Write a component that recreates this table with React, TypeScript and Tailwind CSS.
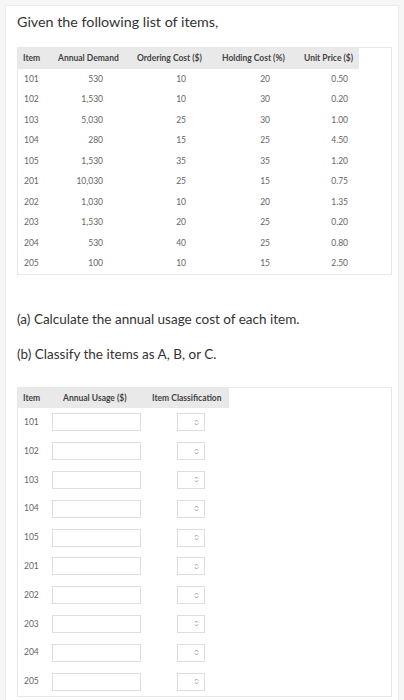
const items = [
  { id: '101', demand: '530', order: '10', hold: '20', price: '0.50' },
  { id: '102', demand: '1,530', order: '10', hold: '30', price: '0.20' },
  { id: '103', demand: '5,030', order: '25', hold: '30', price: '1.00' },
  { id: '104', demand: '280', order: '15', hold: '25', price: '4.50' },
  { id: '105', demand: '1,530', order: '35', hold: '35', price: '1.20' },
  { id: '201', demand: '10,030', order: '25', hold: '15', price: '0.75' },
  { id: '202', demand: '1,030', order: '10', hold: '20', price: '1.35' },
  { id: '203', demand: '1,530', order: '20', hold: '25', price: '0.20' },
  { id: '204', demand: '530', order: '40', hold: '25', price: '0.80' },
  { id: '205', demand: '100', order: '10', hold: '15', price: '2.50' },
];

function SelectArrows() {
  return (
    <svg width="5" height="7" viewBox="0 0 5 7" fill="none" stroke="#9a9a9a" strokeWidth="1">
      <path d="M1 2.6 L2.5 1 L4 2.6" />
      <path d="M1 4.4 L2.5 6 L4 4.4" />
    </svg>
  );
}

export default function App() {
  return (
    <div className="bg-[#f6f6f6] pt-[5px] px-[5px] min-h-[700px] font-['Lato',sans-serif]">
      <div className="bg-white border-t border-l border-r border-[#ececec] pl-[11px] pr-[8px] pt-[7px] pb-[10px]">
        <p className="text-[14.3px] leading-[18px] text-[#333]">Given the following list of items,</p>

        {/* Data table */}
        <div className="mt-[16px] w-[375px] border border-[#e8e8e8]">
          <div className="grid grid-cols-[35px_79px_85px_86px_56px] w-[341px] h-[21px] items-center bg-[#e9e9e9] text-[8.5px] font-bold text-[#444]">
            <span className="pl-[5px]">Item</span>
            <span className="pl-[5px]">Annual Demand</span>
            <span className="pl-[5px]">Ordering Cost ($)</span>
            <span className="pl-[5px]">Holding Cost (%)</span>
            <span className="pl-[1px]">Unit Price ($)</span>
          </div>
          {items.map((it) => (
            <div
              key={it.id}
              className="grid grid-cols-[35px_79px_85px_86px_56px] w-[341px] h-[20.5px] items-center text-[8.5px] text-[#666]"
            >
              <span className="pl-[6px]">{it.id}</span>
              <span className="text-right pr-[29px]">{it.demand}</span>
              <span className="text-right pr-[31px]">{it.order}</span>
              <span className="text-right pr-[33px]">{it.hold}</span>
              <span className="text-right pr-[11px]">{it.price}</span>
            </div>
          ))}
        </div>

        <p className="mt-[35px] text-[13.5px] leading-[18px] text-[#333]">
          (a) Calculate the annual usage cost of each item.
        </p>
        <p className="mt-[17px] text-[13.5px] leading-[18px] text-[#333]">(b) Classify the items as A, B, or C.</p>

        {/* Answer table */}
        <div className="mt-[24px] w-[375px] border border-[#e8e8e8]">
          <div className="grid grid-cols-[34px_94px_83px] w-[211px] h-[20px] items-center bg-[#e9e9e9] text-[8.5px] font-bold text-[#444]">
            <span className="pl-[5px]">Item</span>
            <span className="pl-[11px]">Annual Usage ($)</span>
            <span className="pl-[6px]">Item Classification</span>
          </div>
          {items.map((it) => (
            <div key={it.id} className="grid grid-cols-[34px_94px_83px] w-[211px] h-[28.8px] items-center">
              <span className="pl-[6px] text-[8.5px] text-[#666]">{it.id}</span>
              <div className="h-[18px] w-[89px] border border-[#dedede] bg-white" />
              <div className="ml-[31px] h-[18px] w-[28px] border border-[#dedede] bg-white flex items-center justify-end pr-[5px]">
                <SelectArrows />
              </div>
            </div>
          ))}
        </div>
      </div>
    </div>
  );
}
